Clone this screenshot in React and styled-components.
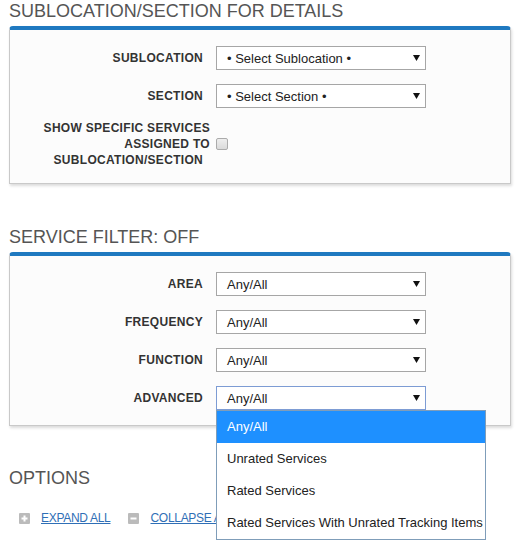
import React from 'react';
import styled, { createGlobalStyle } from 'styled-components';

const GlobalStyle = createGlobalStyle`
  body {
    margin: 0;
    background: #fff;
    font-family: "Liberation Sans", Arial, sans-serif;
  }
`;

const Page = styled.div`
  min-height: 543px;
  padding: 0 12px 0 9px;
`;

const SectionTitle = styled.h2`
  margin: ${(p) => p.top || '0'} 0 4px;
  font-size: 18px;
  font-weight: normal;
  line-height: 22px;
  color: #555;
  text-transform: uppercase;
`;

const Panel = styled.div`
  background: #fcfcfc;
  border: 1px solid #c9c9c9;
  border-top: 4px solid #1f79c0;
  border-radius: 4px 4px 0 0;
  box-shadow: 1px 2px 3px rgba(0, 0, 0, 0.14);
`;

const FormGrid = styled.div`
  display: grid;
  grid-template-columns: 193px 210px;
  column-gap: 13px;
  row-gap: 14px;
  padding: 16px 0 15px;
`;

const Label = styled.div`
  display: flex;
  flex-direction: column;
  align-items: flex-end;
  justify-content: center;
  text-align: right;
  font-size: 12px;
  font-weight: bold;
  letter-spacing: 0.3px;
  line-height: 16px;
  color: #333;
  margin-top: ${(p) => (p.tight ? '-2px' : '0')};
  margin-right: ${(p) => (p.tight ? '-7px' : '0')};
`;

const LabelLine = styled.span`
  padding-right: ${(p) => (p.inset ? '7px' : '0')};
  white-space: nowrap;
`;

const Cell = styled.div`
  display: flex;
  align-items: center;
  margin-top: ${(p) => (p.tight ? '-2px' : '0')};
`;

const SelectWrap = styled.div`
  position: relative;
  width: 210px;
`;

const SelectBox = styled.div`
  box-sizing: border-box;
  height: 24px;
  width: 210px;
  display: flex;
  align-items: center;
  justify-content: space-between;
  padding: 0 5px 0 10px;
  background: #fff;
  border: 1px solid ${(p) => (p.focused ? '#7d9cd4' : '#a6a6a6')};
  font-size: 13px;
  color: #222;
`;

const Arrow = styled.svg`
  width: 7px;
  height: 6px;
`;

const Dropdown = styled.ul`
  position: absolute;
  top: 100%;
  left: 0;
  z-index: 5;
  width: 270px;
  box-sizing: border-box;
  margin: 0;
  padding: 0;
  list-style: none;
  background: #fff;
  border: 1px solid #7f9db9;
  font-size: 13px;
  color: #222;
`;

const Option = styled.li`
  height: 32px;
  line-height: 32px;
  padding-left: 10px;
  white-space: nowrap;
  background: ${(p) => (p.active ? '#1e90ff' : 'transparent')};
  color: ${(p) => (p.active ? '#fff' : '#222')};
`;

const Checkbox = styled.span`
  box-sizing: border-box;
  width: 12px;
  height: 12px;
  border: 1px solid #ababab;
  border-radius: 2px;
  background: linear-gradient(#eeeeee, #dadada);
`;

const LinkRow = styled.div`
  display: flex;
  align-items: center;
  margin-top: 21px;
  padding-left: 10px;
  height: 16px;
`;

const ActionLink = styled.a`
  display: flex;
  align-items: center;
  gap: 11px;
  margin-right: 18px;
  font-size: 12px;
  letter-spacing: -0.3px;
  color: #2f6fb6;
  text-decoration: underline;
  cursor: pointer;
`;

const IconBox = styled.svg`
  width: 11px;
  height: 11px;
  flex: none;
`;

const DownArrow = () => (
  <Arrow viewBox="0 0 7 6">
    <polygon points="0,0 7,0 3.5,6" fill="#111" />
  </Arrow>
);

const Select = ({ value, focused, options }) => (
  <SelectWrap>
    <SelectBox focused={focused}>
      <span>{value}</span>
      <DownArrow />
    </SelectBox>
    {options && (
      <Dropdown>
        {options.map((o, i) => (
          <Option key={o} active={i === 0}>{o}</Option>
        ))}
      </Dropdown>
    )}
  </SelectWrap>
);

const SquareIcon = ({ plus }) => (
  <IconBox viewBox="0 0 11 11">
    <rect x="0" y="0" width="11" height="11" rx="1" fill="#bbbbbb" />
    <rect x="2.5" y="4.5" width="6" height="2" fill="#fff" />
    {plus && <rect x="4.5" y="2.5" width="2" height="6" fill="#fff" />}
  </IconBox>
);

const advancedOptions = [
  'Any/All',
  'Unrated Services',
  'Rated Services',
  'Rated Services With Unrated Tracking Items',
];

const App = () => {
  return (
    <Page>
      <GlobalStyle />
      <SectionTitle>Sublocation/Section for Details</SectionTitle>
      <Panel>
        <FormGrid>
          <Label>SUBLOCATION</Label>
          <Cell><Select value="• Select Sublocation •" /></Cell>
          <Label>SECTION</Label>
          <Cell><Select value="• Select Section •" /></Cell>
          <Label tight>
            <LabelLine>SHOW SPECIFIC SERVICES</LabelLine>
            <LabelLine>ASSIGNED TO</LabelLine>
            <LabelLine inset>SUBLOCATION/SECTION</LabelLine>
          </Label>
          <Cell tight><Checkbox /></Cell>
        </FormGrid>
      </Panel>

      <SectionTitle top="42px">Service Filter: Off</SectionTitle>
      <Panel>
        <FormGrid>
          <Label>AREA</Label>
          <Cell><Select value="Any/All" /></Cell>
          <Label>FREQUENCY</Label>
          <Cell><Select value="Any/All" /></Cell>
          <Label>FUNCTION</Label>
          <Cell><Select value="Any/All" /></Cell>
          <Label>ADVANCED</Label>
          <Cell><Select value="Any/All" focused options={advancedOptions} /></Cell>
        </FormGrid>
      </Panel>

      <SectionTitle top="41px">Options</SectionTitle>
      <LinkRow>
        <ActionLink>
          <SquareIcon plus />
          EXPAND ALL
        </ActionLink>
        <ActionLink>
          <SquareIcon />
          COLLAPSE ALL
        </ActionLink>
      </LinkRow>
    </Page>
  );
};

export default App;
